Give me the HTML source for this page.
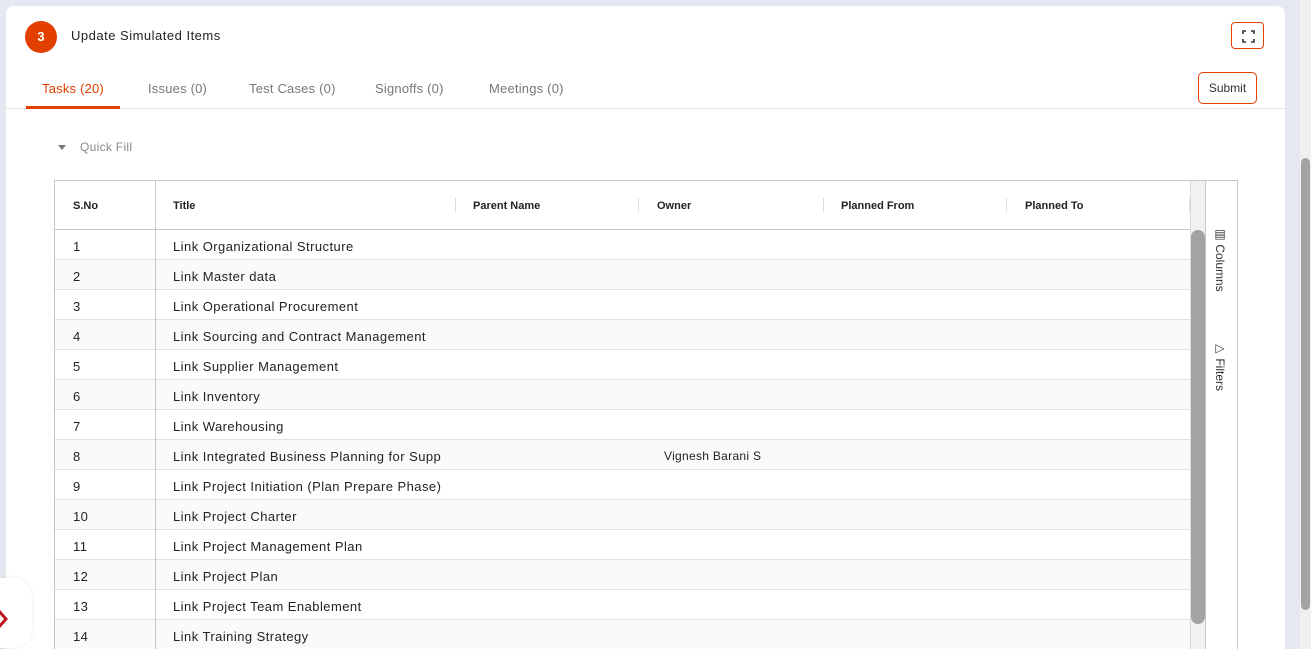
<!DOCTYPE html>
<html><head><style>
*{box-sizing:border-box;margin:0;padding:0}
html,body{width:1311px;height:649px;overflow:hidden}
body{background:#e6e8f1;font-family:"Liberation Sans",sans-serif;position:relative}
.card{position:absolute;left:6px;top:6px;width:1279px;height:660px;background:#fff;border-radius:8px}
.badge{position:absolute;left:25px;top:21px;width:32px;height:32px;border-radius:50%;background:#e34000;color:#fff;font-weight:bold;font-size:13px;text-align:center;line-height:32px}
.ttl{position:absolute;left:71px;top:28px;font-size:13px;color:#222;letter-spacing:.5px;font-weight:500}
.fs{position:absolute;left:1231px;top:22px;width:33px;height:27px;border:1px solid #e34000;border-radius:4px}
.tabs{position:absolute;left:0;top:108px;width:1285px;height:1px;background:#e4e4e4}
.tab{position:absolute;top:81px;font-size:13px;color:#777;letter-spacing:.2px}
.tab.on{color:#e34000}
.uline{position:absolute;left:26px;top:106px;width:94px;height:3px;background:#e34000}
.sub{position:absolute;left:1198px;top:72px;width:59px;height:32px;border:1px solid #e34000;border-radius:5px;font-size:12px;color:#333;text-align:center;line-height:31px}
.qf{position:absolute;left:80px;top:140px;font-size:12px;color:#888;letter-spacing:.3px}
.tri{position:absolute;left:58px;top:145px;border-left:4px solid transparent;border-right:4px solid transparent;border-top:5px solid #777}
.grid{position:absolute;left:54px;top:180px;width:1184px;height:480px;border:1px solid #c5c7cf;overflow:hidden}
.hdr{position:absolute;left:0;top:0;width:1136px;height:49px;border-bottom:1px solid #c5c7cf;background:#fff}
.hdr span{position:absolute;top:19px;font-size:11px;font-weight:bold;color:#222}
.sep{position:absolute;top:17px;width:1px;height:14px;background:#ddd}
.vline{position:absolute;left:100px;top:0;width:1px;height:480px;background:#c5c7cf}
.row{position:absolute;left:0;width:1136px;height:30px;border-bottom:1px solid #dfe0e6;font-size:13px;color:#222;letter-spacing:.45px}
.row.alt{background:#fafafa}
.row .n{position:absolute;left:18px;top:9px}
.row .t{position:absolute;left:118px;top:9px}
.row .o{position:absolute;left:609px;top:9px;font-size:12px;letter-spacing:.3px}
.sbt{position:absolute;left:1135px;top:0;width:15px;height:480px;background:#f1f1f1;border-left:1px solid #ddd}
.sbth{position:absolute;left:1136px;top:49px;width:14px;height:394px;background:#a3a3a3;border-radius:7px}
.side{position:absolute;left:1150px;top:0;width:1px;height:480px;background:#c5c7cf}
.vt{position:absolute;writing-mode:vertical-rl;font-size:12px;color:#333}
.pgs{position:absolute;left:1300px;top:0;width:11px;height:649px;background:#f0f0f0}
.pgt{position:absolute;left:1301px;top:158px;width:9px;height:452px;background:#a3a3a3;border-radius:5px}
.fab{position:absolute;left:-30px;top:578px;width:62px;height:70px;background:#fff;border-radius:20px;box-shadow:0 0 6px rgba(0,0,0,.08)}
</style></head><body>
<div class="card"></div>
<div class="badge">3</div>
<div class="ttl">Update Simulated Items</div>
<div class="fs"><svg width="33" height="27" viewBox="0 0 33 27"><path d="M11 11V8h3M19 8h3v3M22 16v3h-3M14 19h-3v-3" fill="none" stroke="#333" stroke-width="1.6"/></svg></div>
<div class="tab on" style="left:42px">Tasks (20)</div>
<div class="tab" style="left:148px">Issues (0)</div>
<div class="tab" style="left:249px">Test Cases (0)</div>
<div class="tab" style="left:375px">Signoffs (0)</div>
<div class="tab" style="left:489px">Meetings (0)</div>
<div class="tabs"></div>
<div class="uline"></div>
<div class="sub">Submit</div>
<div class="tri"></div>
<div class="qf">Quick Fill</div>
<div class="grid">
<div class="hdr">
<span style="left:18px">S.No</span><span style="left:118px">Title</span>
<div class="sep" style="left:400px"></div><span style="left:418px">Parent Name</span>
<div class="sep" style="left:583px"></div><span style="left:602px">Owner</span>
<div class="sep" style="left:768px"></div><span style="left:786px">Planned From</span>
<div class="sep" style="left:951px"></div><span style="left:970px">Planned To</span>
<div class="sep" style="left:1134px"></div>
</div>
<div class="row" style="top:49px"><span class="n">1</span><span class="t">Link Organizational Structure</span></div>
<div class="row alt" style="top:79px"><span class="n">2</span><span class="t">Link Master data</span></div>
<div class="row" style="top:109px"><span class="n">3</span><span class="t">Link Operational Procurement</span></div>
<div class="row alt" style="top:139px"><span class="n">4</span><span class="t">Link Sourcing and Contract Management</span></div>
<div class="row" style="top:169px"><span class="n">5</span><span class="t">Link Supplier Management</span></div>
<div class="row alt" style="top:199px"><span class="n">6</span><span class="t">Link Inventory</span></div>
<div class="row" style="top:229px"><span class="n">7</span><span class="t">Link Warehousing</span></div>
<div class="row alt" style="top:259px"><span class="n">8</span><span class="t">Link Integrated Business Planning for Supp</span><span class="o">Vignesh Barani S</span></div>
<div class="row" style="top:289px"><span class="n">9</span><span class="t">Link Project Initiation (Plan Prepare Phase)</span></div>
<div class="row alt" style="top:319px"><span class="n">10</span><span class="t">Link Project Charter</span></div>
<div class="row" style="top:349px"><span class="n">11</span><span class="t">Link Project Management Plan</span></div>
<div class="row alt" style="top:379px"><span class="n">12</span><span class="t">Link Project Plan</span></div>
<div class="row" style="top:409px"><span class="n">13</span><span class="t">Link Project Team Enablement</span></div>
<div class="row alt" style="top:439px"><span class="n">14</span><span class="t">Link Training Strategy</span></div>
<div class="vline"></div>
<div class="sbt"></div><div class="sbth"></div>
<div class="side"></div>
<div class="vt" style="left:1158px;top:46px">&#9636; Columns</div>
<div class="vt" style="left:1158px;top:160px">&#9655; Filters</div>
</div>
<div class="pgs"></div><div class="pgt"></div>
<div class="fab"><svg style="position:absolute;left:28px;top:32px" width="10" height="18"><path d="M0 0L8 9L0 18" fill="none" stroke="#c0141c" stroke-width="3"/></svg></div>
</body></html>
